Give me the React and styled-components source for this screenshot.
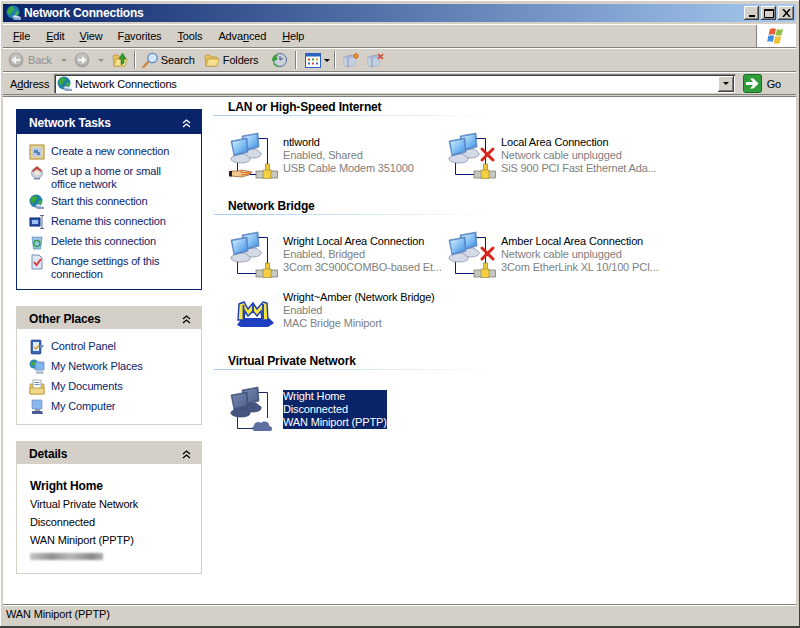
import React from "react";
import styled, { createGlobalStyle } from "styled-components";

const GlobalStyle = createGlobalStyle`
  html, body { margin: 0; padding: 0; background: #d4d0c8; }
  * { box-sizing: border-box; }
`;

const FONT = `"Liberation Sans", Arial, sans-serif`;

const Window = styled.div`
  width: 800px;
  height: 628px;
  display: flex;
  flex-direction: column;
  padding: 4px 4px 2px 3px;
  background: #d4d0c8;
  box-shadow: inset -1px -2px 0 #404040, inset 1px 1px 0 #fff;
  font: 11px/13px ${FONT};
  letter-spacing: -0.15px;
  color: #000;
  overflow: hidden;
`;

const TitleBar = styled.div`
  height: 18px;
  flex: none;
  display: flex;
  align-items: center;
  padding: 0 2px 0 3px;
  background: linear-gradient(90deg, #0a246a, #a6caf0);
`;

const TitleText = styled.span`
  margin-left: 2px;
  flex: 1;
  color: #fff;
  font-weight: bold;
  font-size: 12px;
  letter-spacing: -0.2px;
`;

const CaptionButton = styled.button`
  width: ${(p) => p.$w || 15}px;
  height: 14px;
  margin-left: ${(p) => p.$gap || 0}px;
  padding: 0;
  border: 0;
  background: #d4d0c8;
  box-shadow: inset -1px -1px 0 #404040, inset 1px 1px 0 #fff, inset -2px -2px 0 #808080;
  display: flex;
  align-items: center;
  justify-content: center;
`;

const MenuBar = styled.div`
  height: 24px;
  margin-top: 2px;
  flex: none;
  display: flex;
  align-items: center;
  border-top: 1px solid #fff;
  border-bottom: 1px solid #808080;
  box-shadow: 0 1px 0 #fff;
`;

const MenuItems = styled.div`
  flex: 1;
  display: flex;
  padding: 1px 0 0 10px;
  height: 100%;
  align-items: center;
  border-right: 1px solid #808080;
`;

const MenuItem = styled.span`
  margin-right: ${(p) => p.$gap}px;
`;

const LogoBox = styled.div`
  width: 39px;
  height: 100%;
  background: #fff;
  display: flex;
  align-items: center;
  justify-content: center;
`;

const Toolbar = styled.div`
  height: 24px;
  flex: none;
  display: flex;
  align-items: center;
  padding: 1px 0 0 5px;
  border-bottom: 1px solid #808080;
`;

const ToolLabel = styled.span`
  margin-left: ${(p) => p.$left || 3}px;
  color: ${(p) => (p.$off ? "#8f8d88" : "#000")};
`;

const ToolIcon = styled.span`
  display: inline-flex;
  margin-left: ${(p) => p.$left || 0}px;
`;

const ToolSep = styled.span`
  width: 2px;
  height: 18px;
  margin: 0 ${(p) => p.$right}px 0 ${(p) => p.$left}px;
  border-left: 1px solid #808080;
  border-right: 1px solid #fff;
`;

const DropArrow = styled.span`
  width: 0;
  height: 0;
  margin-left: ${(p) => p.$left || 0}px;
  border-left: 3px solid transparent;
  border-right: 3px solid transparent;
  border-top: 3px solid ${(p) => (p.$off ? "#8f8d88" : "#000")};
`;

const AddressBar = styled.div`
  height: 23px;
  flex: none;
  display: flex;
  align-items: center;
  padding: 0 15px 0 7px;
  border-top: 1px solid #fff;
  border-bottom: 1px solid #808080;
`;

const AddressLabel = styled.span`
  width: 38px;
  flex: none;
  padding-top: 1px;
  white-space: nowrap;
`;

const AddressField = styled.div`
  flex: 1;
  height: 20px;
  margin-left: 6px;
  display: flex;
  align-items: center;
  padding-left: 2px;
  background: #fff;
  border: 1px solid;
  border-color: #808080 #d4d0c8 #d4d0c8 #808080;
  box-shadow: inset 1px 1px 0 #404040;
`;

const AddressText = styled.span`
  flex: 1;
  margin-left: 2px;
  padding-top: 2px;
`;

const ComboButton = styled.span`
  width: 16px;
  height: 16px;
  margin-right: 1px;
  display: flex;
  align-items: center;
  justify-content: center;
  background: #d4d0c8;
  box-shadow: inset -1px -1px 0 #404040, inset 1px 1px 0 #fff, inset -2px -2px 0 #808080;
`;

const GoLabel = styled.span`
  margin-left: 5px;
  padding-top: 1px;
`;

const GoIcon = styled.span`
  display: inline-flex;
  margin-left: 7px;
`;

const Content = styled.div`
  flex: 1;
  min-height: 0;
  display: flex;
  margin-top: 1px;
  background: #fff;
  border-top: 1px solid #808080;
`;

const SidePane = styled.div`
  width: 207px;
  flex: none;
  padding: 12px 0 0 13px;
  display: flex;
  flex-direction: column;
  gap: 16px;
`;

const Panel = styled.section`
  width: 186px;
`;

const PanelHead = styled.div`
  height: ${(p) => (p.$primary ? 25 : 23)}px;
  display: flex;
  align-items: center;
  justify-content: space-between;
  padding: 3px 11px 0 13px;
  font-weight: bold;
  font-size: 12px;
  background: ${(p) => (p.$primary ? "#0a246a" : "#d4d0c8")};
  color: ${(p) => (p.$primary ? "#fff" : "#000")};
`;

const PanelBody = styled.div`
  height: ${(p) => p.$h}px;
  padding: ${(p) => p.$pad || "11px 6px 0 12px"};
  border: 1px solid ${(p) => (p.$primary ? "#0a246a" : "#d4d0c8")};
  border-top: 0;
`;

const TaskRow = styled.div`
  display: flex;
  gap: 6px;
  margin-bottom: ${(p) => (p.$tall ? 4 : 7)}px;
  color: #0a246a;
`;

const TaskIcon = styled.span`
  width: 16px;
  height: 13px;
  flex: none;
  margin-top: -1px;
`;

const DetailLine = styled.div`
  height: 18px;
  line-height: 18px;
  font-weight: ${(p) => (p.$bold ? "bold" : "normal")};
  font-size: ${(p) => (p.$bold ? 12 : 11)}px;
`;

const Smudge = styled.div`
  width: 73px;
  height: 7px;
  margin-top: 4px;
  background: linear-gradient(90deg, #c4c4c4, #8f8f8f 30%, #b8b8b8 55%, #8a8a8a 85%, #b0b0b0);
  filter: blur(1px);
`;

const Main = styled.div`
  flex: 1;
  min-width: 0;
  padding: 2px 0 0 4px;
`;

const GroupHead = styled.div`
  width: 282px;
  height: 17px;
  padding: 2px 0 0 14px;
  font-weight: bold;
  font-size: 12px;
  border-bottom: 1px solid transparent;
  border-image: linear-gradient(90deg, #a6caf0, #ffffff) 1;
`;

const Tiles = styled.div`
  display: grid;
  grid-template-columns: 218px 218px;
  padding: 14px 0 0 14px;
  margin-bottom: ${(p) => p.$after}px;
  row-gap: 6px;
`;

const Tile = styled.div`
  display: flex;
  height: 50px;
`;

const TileIcon = styled.span`
  width: 50px;
  height: 50px;
  flex: none;
`;

const TileText = styled.div`
  margin-left: 5px;
  padding-top: 6px;
  min-width: 0;
  width: 165px;
`;

const TileLines = styled.div`
  display: ${(p) => (p.$selected ? "inline-block" : "block")};
  background: ${(p) => (p.$selected ? "#0a246a" : "transparent")};
  color: ${(p) => (p.$selected ? "#fff" : "#000")};
`;

const TileLine = styled.div`
  height: 13px;
  white-space: nowrap;
  color: ${(p) => (p.$muted ? "#808080" : "inherit")};
`;

const StatusBar = styled.div`
  height: 22px;
  flex: none;
  display: flex;
  align-items: center;
  padding: 0 0 2px 3px;
  border-top: 1px solid #808080;
  box-shadow: inset 0 1px 0 #fff;
`;

const Globe = ({ size = 16 }) => (
  <svg width={size} height={size} viewBox="0 0 16 16">
    <circle cx="7" cy="7" r="6.5" fill="#1f7fa8" />
    <path d="M3 3c2-2 4-1 5 0s-1 3-2 4-1 3-3 2-2-4 0-6z" fill="#3aa83a" />
    <path d="M9 8l2-2 2 1-1 3-2 1z" fill="#46b046" />
    <path d="M6 11l9 2v2H8z" fill="#8aa0c8" />
    <path d="M8 10l7 2-1 1-7-1z" fill="#dfe8f6" />
  </svg>
);

const Chevrons = ({ color }) => (
  <svg width="9" height="9" viewBox="0 0 9 9" fill="none" stroke={color} strokeWidth="1.3">
    <path d="M1 4l3.5-3L8 4M1 8l3.5-3L8 8" />
  </svg>
);

const NavCircle = ({ back }) => (
  <svg width="16" height="16" viewBox="0 0 16 16">
    <circle cx="8" cy="8" r="7.5" fill="#a9a8a4" />
    <circle cx="8" cy="7" r="5.5" fill="#c4c3bf" />
    <path
      d={back ? "M12 7v2H8v3L3.5 8 8 4v3z" : "M4 7v2h4v3l4.5-4L8 4v3z"}
      fill="#f4f4f2"
    />
  </svg>
);

const FolderIcon = ({ arrow }) => (
  <svg width="16" height="16" viewBox="0 0 16 16">
    <path d="M1 4l1-1h4l1 2h6v9H2z" fill="#e8c15a" stroke="#b08a2a" strokeWidth=".6" />
    <path d="M2 14l2-7h11l-2 7z" fill="#f7e08e" stroke="#b08a2a" strokeWidth=".6" />
    {arrow && <path d="M9 13V7H7l3.5-6L14 7h-2v4z" fill="#2f9e2f" stroke="#1c6c1c" strokeWidth=".5" />}
  </svg>
);

const SearchIcon = () => (
  <svg width="17" height="17" viewBox="0 0 17 17">
    <path d="M6 10l-4.500 5" stroke="#c98a3c" strokeWidth="2.400" strokeLinecap="round" />
    <circle cx="10.500" cy="6" r="4.700" fill="#d5e6f8" stroke="#5c86c4" strokeWidth="1.300" />
  </svg>
);

const HistoryIcon = () => (
  <svg width="16" height="16" viewBox="0 0 16 16">
    <circle cx="9" cy="8" r="6.500" fill="#c9d2dc" stroke="#55708e" />
    <path d="M9 4v4l3-2" stroke="#33506e" fill="none" />
    <path d="M1 8c0-3 2-5 5-6l1 2-2 1 2 2-5 3z" fill="#37a03a" />
    <path d="M3 11l4 3-1 1-4-3z" fill="#37a03a" />
  </svg>
);

const ViewsIcon = () => (
  <svg width="16" height="15" viewBox="0 0 16 15">
    <rect x=".5" y=".5" width="15" height="14" fill="#fff" stroke="#2a62c0" />
    <rect x="1" y="1" width="14" height="2.500" fill="#2a62c0" />
    <rect x="3" y="5.500" width="2" height="2" fill="#d24a3a" />
    <rect x="7" y="5.500" width="2" height="2" fill="#3aa040" />
    <rect x="11" y="5.500" width="2" height="2" fill="#d8a830" />
    <rect x="3" y="9.500" width="2" height="2" fill="#3a70c8" />
    <rect x="7" y="9.500" width="2" height="2" fill="#d24a3a" />
    <rect x="11" y="9.500" width="2" height="2" fill="#3a70c8" />
  </svg>
);

const DriveIcon = ({ cross }) => (
  <svg width="17" height="15" viewBox="0 0 17 15">
    <path d="M1 4l8-2 3 2v8l-7 2-4-2z" fill="#a9b7d6" stroke="#7685a8" strokeWidth=".5" />
    <path d="M1 4l4 2 7-2v8l-7 2-4-2z" fill="#c4cee2" />
    <path d="M5 6v8" stroke="#8392b4" />
    {cross ? (
      <path d="M11 1l5 5M16 1l-5 5" stroke="#d8432c" strokeWidth="1.600" />
    ) : (
      <circle cx="13" cy="3" r="2.200" fill="#e8a030" stroke="#c8401c" strokeWidth=".8" />
    )}
  </svg>
);

const WinLogo = () => (
  <svg width="20" height="19" viewBox="0 0 20 19">
    <path d="M3 2c2-1 4-1 6 0l-1.500 6c-2-1-4-1-6 0z" fill="#e8603a" />
    <path d="M10 2c2 1 4 1 6 0l-1.500 6c-2 1-4 1-6 0z" fill="#8ec03c" />
    <path d="M1.200 9c2-1 4-1 6 0L5.700 15c-2-1-4-1-5.500 0z" fill="#3f8ee0" />
    <path d="M8.200 9c2 1 4 1 6 0L12.700 16c-2 1-4 1-6 0z" fill="#f0c030" />
  </svg>
);

const GoArrow = () => (
  <svg width="19" height="19" viewBox="0 0 19 19">
    <rect x=".5" y=".5" width="18" height="18" rx="2" fill="#2f9e3a" stroke="#1c6c28" />
    <path d="M3 8h7L7 4.500h3.500L15.500 9.500 10.500 14.500H7L10 11H3z" fill="#fff" />
  </svg>
);

const TaskGlyph = ({ name }) => {
  const icons = {
    create: (
      <>
        <rect x="1" y="1" width="14" height="14" fill="#e8d49a" stroke="#b08a2a" />
        <rect x="3.500" y="3.500" width="9" height="9" fill="#b8cce8" />
        <path d="M5 6h4v3H5zM8 8h3v3H8z" fill="#5a82c0" />
      </>
    ),
    home: (
      <>
        <circle cx="8" cy="9" r="5.500" fill="#c8d4e4" stroke="#7a8aa0" strokeWidth=".6" />
        <path d="M3 7l5-5 5 5-1 1-4-3-4 3z" fill="#c8402c" />
        <rect x="5.500" y="7" width="5" height="4" fill="#f0e8d0" />
        <path d="M5 14h6v1.500H5z" fill="#7a8aa0" />
      </>
    ),
    start: <Globe />,
    rename: (
      <>
        <rect x="1" y="4" width="10" height="8" fill="#2a52b0" stroke="#0a246a" />
        <rect x="3" y="6" width="6" height="4" fill="#9cc0f0" />
        <path d="M11 1h4v1h-1.500v12H15v1h-4v-1h1.500V2H11z" fill="#5a6a8a" />
      </>
    ),
    del: (
      <>
        <path d="M3 3l10 0-1.500 12h-7z" fill="#9cc4ec" stroke="#4a80b8" strokeWidth=".7" />
        <path d="M4 1l4 2 4-2 1 2H3z" fill="#dfeaf6" />
        <circle cx="8" cy="9.500" r="3" fill="none" stroke="#30a040" strokeWidth="1.400" />
      </>
    ),
    change: (
      <>
        <path d="M3 1h7l3 3v11H3z" fill="#dde6f4" stroke="#5a78a8" strokeWidth=".8" />
        <path d="M5 8l2.500 3L12 5" fill="none" stroke="#d8302c" strokeWidth="1.800" />
      </>
    ),
    panel: (
      <>
        <rect x="2" y="1" width="10" height="14" rx="1" fill="#3464b8" stroke="#1c3a80" strokeWidth=".6" />
        <rect x="4" y="3" width="6" height="9" fill="#dfeaf8" />
        <path d="M5 8l2 2 3-4" stroke="#d8a030" fill="none" strokeWidth="1.400" />
        <path d="M11 6h4l-2 3h-2z" fill="#6a8ac0" />
      </>
    ),
    places: (
      <>
        <circle cx="5" cy="5" r="4.500" fill="#2f8fb0" />
        <path d="M2 3h4v3H3z" fill="#48ac3c" />
        <rect x="6" y="3" width="9" height="8" fill="#7fb6ec" stroke="#4a76b0" strokeWidth=".6" />
        <path d="M7 12h7l1 3H7z" fill="#b4c0d4" />
      </>
    ),
    docs: (
      <>
        <path d="M1 5h14v10H1z" fill="#e8c868" stroke="#b08a2a" strokeWidth=".7" />
        <rect x="4" y="1" width="8" height="9" fill="#fff" stroke="#7a8aa0" strokeWidth=".7" />
        <path d="M5.500 3.500h5M5.500 5.500h5" stroke="#6a8ac0" />
        <path d="M1 9h14v6H1z" fill="#f2d98a" stroke="#b08a2a" strokeWidth=".7" />
      </>
    ),
    computer: (
      <>
        <rect x="3" y="1" width="10" height="9" rx="1" fill="#8ab8f0" stroke="#5a7ab0" strokeWidth=".6" />
        <rect x="6" y="10" width="5" height="2" fill="#8a9ab8" />
        <path d="M3 12h10l1 3H3z" fill="#4a5c90" />
      </>
    ),
  };
  return (
    <svg width="16" height="16" viewBox="0 0 16 16">
      {icons[name]}
    </svg>
  );
};

const Connector = () => (
  <>
    <rect x="37.500" y="34" width="4" height="7" fill="#f0c838" stroke="#7c7440" strokeWidth=".6" />
    <rect x="28" y="41" width="9.500" height="7" fill="#c8c8c0" stroke="#5e5e58" strokeWidth=".6" />
    <rect x="41.500" y="41" width="8" height="7" fill="#c8c8c0" stroke="#5e5e58" strokeWidth=".6" />
    <rect x="35" y="40" width="8" height="8.500" fill="#f4d040" stroke="#8c8040" strokeWidth=".6" />
  </>
);

const Monitor = ({ x, y, id, dark }) => (
  <g transform={`translate(${x} ${y})`}>
    <path d="M5 16h9l5 4c1 3-3 5-9 5s-11-2-10-5z" fill={dark ? "#46557f" : "#d4dae6"} stroke={dark ? "#3a4870" : "#7f8aa6"} strokeWidth=".7" />
    <path d="M0 3l16-3 1 14-14 4z" fill={dark ? "#4b5b87" : "#5f93d6"} stroke={dark ? "#3a4870" : "#4a72b0"} strokeWidth=".6" />
    <path d="M1.500 4l13-2.500 1 11-12 3.500z" fill={`url(#${id})`} />
  </g>
);

const NetIcon = ({ overlay, dark }) => {
  const id = dark ? "screenDark" : "screenLit";
  const wire = dark ? "#1c2a5c" : "#0a1a70";
  return (
    <svg width="50" height="50" viewBox="0 0 50 50">
      <defs>
        <linearGradient id={id} x1="0" y1="0" x2="1" y2="1">
          <stop offset="0" stopColor={dark ? "#7384ad" : "#d4f0fc"} />
          <stop offset="1" stopColor={dark ? "#53658f" : "#3f94ea"} />
        </linearGradient>
      </defs>
      <path d="M29 8.500h10.500V34" fill="none" stroke={wire} />
      <path d="M9.500 30v14.500H29" fill="none" stroke={wire} />
      <Monitor x={14} y={3} id={id} dark={dark} />
      <Monitor x={3} y={8} id={id} dark={dark} />
      {overlay === "cloud" ? (
        <path d="M27 47c-3 0-4-4-1-5 0-4 5-5 7-3 3-3 9-1 8 3 4 0 4 5 1 5z" fill="#5d6f9e" />
      ) : (
        <Connector />
      )}
      {overlay === "x" && (
        <path d="M36 19l11 11M47 19L36 30" stroke="#d8261c" strokeWidth="3" strokeLinecap="round" />
      )}
      {overlay === "hand" && (
        <>
          <path d="M3 41h7l4-1 10 2-3 3-8 2-10-1z" fill="#f2c890" stroke="#7a3a10" strokeWidth=".6" />
          <path d="M12 42l11 1M13 45l8-1" stroke="#e0641c" strokeWidth="1.200" />
          <rect x="1" y="41" width="3" height="5.500" fill="#222" />
        </>
      )}
    </svg>
  );
};

const BridgeIcon = () => (
  <svg width="50" height="50" viewBox="0 0 50 50">
    <path d="M9 40l5-7h27l5 5-6 4H13z" fill="#1c40c0" />
    <path d="M11 19l5-2 4 7 5-6 4 6 6-7 4 1 1 17H34l-1-9-4 5-4-5-5 5-3-5-1 9h-6z" fill="#f5e63c" stroke="#1c3cb8" strokeWidth="1.400" />
    <path d="M15.500 20v14M35 19v15M25 18v9" stroke="#1c3cb8" strokeWidth="1.800" />
  </svg>
);

const tasks = [
  ["create", "Create a new connection"],
  ["home", <>Set up a home or small<br />office network</>, true],
  ["start", "Start this connection"],
  ["rename", "Rename this connection"],
  ["del", "Delete this connection"],
  ["change", <>Change settings of this<br />connection</>, true],
];

const places = [
  ["panel", "Control Panel"],
  ["places", "My Network Places"],
  ["docs", "My Documents"],
  ["computer", "My Computer"],
];

const groups = [
  {
    title: "LAN or High-Speed Internet",
    after: 18,
    tiles: [
      { name: "ntlworld", status: "Enabled, Shared", device: "USB Cable Modem 351000", overlay: "hand" },
      { name: "Local Area Connection", status: "Network cable unplugged", device: "SiS 900 PCI Fast Ethernet Ada...", overlay: "x" },
    ],
  },
  {
    title: "Network Bridge",
    after: 18,
    tiles: [
      { name: "Wright Local Area Connection", status: "Enabled, Bridged", device: "3Com 3C900COMBO-based Et..." },
      { name: "Amber Local Area Connection", status: "Network cable unplugged", device: "3Com EtherLink XL 10/100 PCI...", overlay: "x" },
      { name: "Wright~Amber (Network Bridge)", status: "Enabled", device: "MAC Bridge Miniport", bridge: true },
    ],
  },
  {
    title: "Virtual Private Network",
    after: 0,
    tiles: [
      { name: "Wright Home", status: "Disconnected", device: "WAN Miniport (PPTP)", overlay: "cloud", selected: true },
    ],
  },
];

export default function App() {
  return (
    <Window>
      <GlobalStyle />
      <TitleBar>
        <Globe />
        <TitleText>Network Connections</TitleText>
        <CaptionButton>
          <svg width="8" height="8"><rect x="1" y="6" width="6" height="2" fill="#000" /></svg>
        </CaptionButton>
        <CaptionButton $gap={2}>
          <svg width="10" height="9"><path d="M.5 1.500h9v7h-9z" fill="none" stroke="#000" /><path d="M0 1h10" stroke="#000" strokeWidth="2" /></svg>
        </CaptionButton>
        <CaptionButton $gap={2} $w={16}>
          <svg width="9" height="8"><path d="M1 0l7 8M8 0L1 8" stroke="#000" strokeWidth="1.500" /></svg>
        </CaptionButton>
      </TitleBar>

      <MenuBar>
        <MenuItems>
          <MenuItem $gap={16}><u>F</u>ile</MenuItem>
          <MenuItem $gap={15}><u>E</u>dit</MenuItem>
          <MenuItem $gap={15}><u>V</u>iew</MenuItem>
          <MenuItem $gap={16}>F<u>a</u>vorites</MenuItem>
          <MenuItem $gap={16}><u>T</u>ools</MenuItem>
          <MenuItem $gap={16}>Adva<u>n</u>ced</MenuItem>
          <MenuItem $gap={0}><u>H</u>elp</MenuItem>
        </MenuItems>
        <LogoBox><WinLogo /></LogoBox>
      </MenuBar>

      <Toolbar>
        <NavCircle back />
        <ToolLabel $off $left={4}>Back</ToolLabel>
        <DropArrow $off $left={9} />
        <ToolIcon $left={7}><NavCircle /></ToolIcon>
        <DropArrow $off $left={8} />
        <ToolIcon $left={8}><FolderIcon arrow /></ToolIcon>
        <ToolSep $left={6} $right={6} />
        <SearchIcon />
        <ToolLabel $left={2}>Search</ToolLabel>
        <ToolIcon $left={9}><FolderIcon /></ToolIcon>
        <ToolLabel $left={3}>Folders</ToolLabel>
        <ToolIcon $left={13}><HistoryIcon /></ToolIcon>
        <ToolSep $left={8} $right={7} />
        <ToolIcon $left={1}><ViewsIcon /></ToolIcon>
        <DropArrow $left={3} />
        <ToolSep $left={4} $right={7} />
        <DriveIcon />
        <ToolIcon $left={7}><DriveIcon cross /></ToolIcon>
      </Toolbar>

      <AddressBar>
        <AddressLabel>A<u>d</u>dress</AddressLabel>
        <AddressField>
          <Globe />
          <AddressText>Network Connections</AddressText>
          <ComboButton><DropArrow /></ComboButton>
        </AddressField>
        <GoIcon><GoArrow /></GoIcon>
        <GoLabel>Go</GoLabel>
      </AddressBar>

      <Content>
        <SidePane>
          <Panel>
            <PanelHead $primary>
              Network Tasks
              <Chevrons color="#fff" />
            </PanelHead>
            <PanelBody $primary $h={156}>
              {tasks.map(([icon, label, tall]) => (
                <TaskRow key={icon} $tall={tall}>
                  <TaskIcon><TaskGlyph name={icon} /></TaskIcon>
                  <span>{label}</span>
                </TaskRow>
              ))}
            </PanelBody>
          </Panel>
          <Panel>
            <PanelHead>
              Other Places
              <Chevrons color="#000" />
            </PanelHead>
            <PanelBody $h={96}>
              {places.map(([icon, label]) => (
                <TaskRow key={icon}>
                  <TaskIcon><TaskGlyph name={icon} /></TaskIcon>
                  <span>{label}</span>
                </TaskRow>
              ))}
            </PanelBody>
          </Panel>
          <Panel>
            <PanelHead>
              Details
              <Chevrons color="#000" />
            </PanelHead>
            <PanelBody $h={110} $pad="13px 6px 0 13px">
              <DetailLine $bold>Wright Home</DetailLine>
              <DetailLine>Virtual Private Network</DetailLine>
              <DetailLine>Disconnected</DetailLine>
              <DetailLine>WAN Miniport (PPTP)</DetailLine>
              <Smudge />
            </PanelBody>
          </Panel>
        </SidePane>

        <Main>
          {groups.map((group) => (
            <div key={group.title}>
              <GroupHead>{group.title}</GroupHead>
              <Tiles $after={group.after}>
                {group.tiles.map((tile) => (
                  <Tile key={tile.name}>
                    <TileIcon>
                      {tile.bridge ? <BridgeIcon /> : <NetIcon overlay={tile.overlay} dark={tile.selected} />}
                    </TileIcon>
                    <TileText>
                      <TileLines $selected={tile.selected}>
                        <TileLine>{tile.name}</TileLine>
                        <TileLine $muted={!tile.selected}>{tile.status}</TileLine>
                        <TileLine $muted={!tile.selected}>{tile.device}</TileLine>
                      </TileLines>
                    </TileText>
                  </Tile>
                ))}
              </Tiles>
            </div>
          ))}
        </Main>
      </Content>

      <StatusBar>WAN Miniport (PPTP)</StatusBar>
    </Window>
  );
}
